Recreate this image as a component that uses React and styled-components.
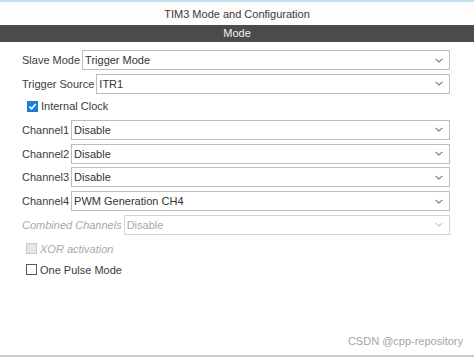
import React from 'react'
import styled, { createGlobalStyle } from 'styled-components';

const GlobalStyle = createGlobalStyle`
  html, body { margin: 0; padding: 0; background: #fff; }
  body { font-family: "Liberation Sans", Arial, sans-serif; }
`;

function Chevron({ disabled }) {
  return (
    <svg width="8" height="5" viewBox="0 0 8 5">
      <path d="M0.5 0.8 L4 4 L7.5 0.8" fill="none"
        stroke={disabled ? '#c4c4c4' : '#7a7a7a'} strokeWidth="1.1" />
    </svg>
  );
}

function Select({ label, value, disabled }) {
  return (
    <Row>
      <Label disabled={disabled}>{label}</Label>
      <Box disabled={disabled}>
        <span>{value}</span>
        <Chevron disabled={disabled} />
      </Box>
    </Row>
  );
}

function Check({ label, checked, disabled, indent, top = 0, bottom = 0 }) {
  return (
    <CheckRow indent={indent} top={top} bottom={bottom}>
      <Square checked={checked} disabled={disabled}>
        {checked && (
          <svg width="9" height="9" viewBox="0 0 9 9">
            <path d="M1.5 4.6 L3.6 6.7 L7.6 2" fill="none" stroke="#fff" strokeWidth="1.6" />
          </svg>
        )}
      </Square>
      <CheckText disabled={disabled}>{label}</CheckText>
    </CheckRow>
  );
}

function App() {
  return (
    <Page>
      <GlobalStyle />
      <TopStrip />
      <Title>TIM3 Mode and Configuration</Title>
      <SectionBar>Mode</SectionBar>
      <Form>
        <Select label="Slave Mode" value="Trigger Mode" />
        <Select label="Trigger Source" value="ITR1" />
        <Check label="Internal Clock" checked indent={5} bottom={1.5} />
        <Select label="Channel1" value="Disable" />
        <Select label="Channel2" value="Disable" />
        <Select label="Channel3" value="Disable" />
        <Select label="Channel4" value="PWM Generation CH4" />
        <Select label="Combined Channels" value="Disable" disabled />
        <Check label="XOR activation" disabled indent={4} top={1.75} />
        <Check label="One Pulse Mode" indent={4} />
      </Form>
      <Watermark>CSDN @cpp-repository</Watermark>
      <BottomStrip />
    </Page>
  )
}

const Page = styled.div`
  position: relative;
  width: 474px;
  height: 357px;
  display: flex;
  flex-direction: column;
  background: #fff;
  color: #333;
  font-size: 11px;
  overflow: hidden;
`;

const TopStrip = styled.div`
  height: 2px;
  background: #bde3f1;
`;

const Title = styled.div`
  height: 23px;
  line-height: 24px;
  text-align: center;
  font-size: 11px;
  color: #3a3a3a;
  background: #fefcfd;
`;

const SectionBar = styled.div`
  height: 17px;
  line-height: 17px;
  text-align: center;
  background: #4b4b4b;
  color: #f2f2f2;
  font-size: 11px;
`;

const Form = styled.div`
  flex: 1;
  display: flex;
  flex-direction: column;
  gap: 3.75px;
  padding: 8px 24px 0 22px;
`;

const Row = styled.div`
  display: flex;
  align-items: center;
  height: 20px;
`;

const Label = styled.span`
  color: ${p => (p.disabled ? '#a8a8a8' : '#3c3c3c')};
  font-style: ${p => (p.disabled ? 'italic' : 'normal')};
  margin-right: 2px;
  white-space: nowrap;
`;

const Box = styled.div`
  flex: 1;
  height: 20px;
  box-sizing: border-box;
  display: flex;
  align-items: center;
  justify-content: space-between;
  padding: 0 6px 0 2px;
  border: 1px solid ${p => (p.disabled ? '#d4d4d4' : '#bcbcbc')};
  color: ${p => (p.disabled ? '#a8a8a8' : '#333')};
  background: #fff;
  white-space: nowrap;
`;

const CheckRow = styled.div`
  display: flex;
  align-items: center;
  height: 17px;
  padding-left: ${p => p.indent}px;
  margin-top: ${p => p.top}px;
  margin-bottom: ${p => p.bottom}px;
`;

const Square = styled.div`
  width: 11px;
  height: 11px;
  box-sizing: border-box;
  display: flex;
  align-items: center;
  justify-content: center;
  margin-right: 3px;
  border: 1px solid ${p => (p.checked ? '#1a7ad4' : p.disabled ? '#c8c8c8' : '#5a5a5a')};
  background: ${p => (p.checked ? '#1f80d9' : p.disabled ? '#e6e6e6' : '#fff')};
`;

const CheckText = styled.span`
  color: ${p => (p.disabled ? '#a8a8a8' : '#3c3c3c')};
  font-style: ${p => (p.disabled ? 'italic' : 'normal')};
`;

const Watermark = styled.div`
  position: absolute;
  right: 11px;
  bottom: 10px;
  font-size: 11px;
  color: #a2a6aa;
`;

const BottomStrip = styled.div`
  height: 2px;
  background: #c9cdd1;
`;

export default App
